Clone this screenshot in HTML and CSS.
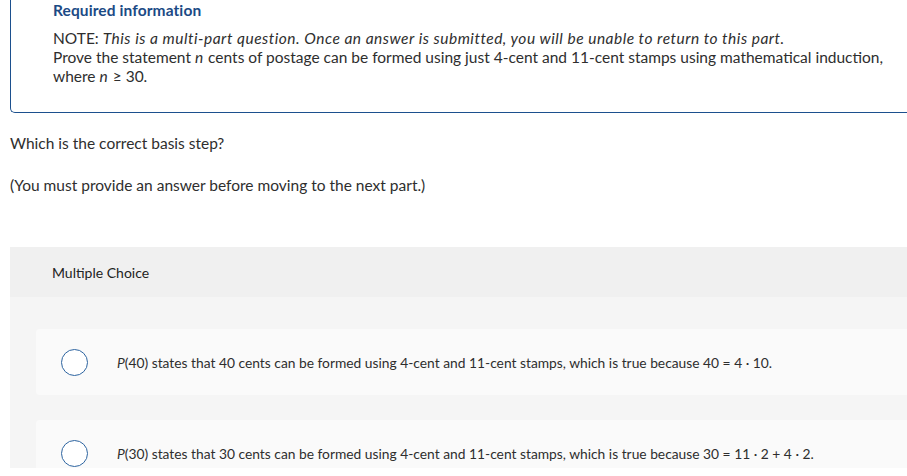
FILE: index.html
```html
<!DOCTYPE html>
<html>
<head>
<meta charset="utf-8">
<link rel="stylesheet" href="styles.css">
</head>
<body>
<div class="card">
  <div class="card-title">Required information</div>
  <div class="card-body">
    <p>NOTE: <i class="note">This is a multi-part question. Once an answer is submitted, you will be unable to return to this part.</i></p>
    <p class="prove">Prove the statement <i class="var">n</i> cents of postage can be formed using just 4-cent and 11-cent stamps using mathematical induction, where <i class="var">n</i> ≥ 30.</p>
  </div>
</div>
<div class="question">
  <p class="q1">Which is the correct basis step?</p>
  <p class="q2">(You must provide an answer before moving to the next part.)</p>
</div>
<div class="mc">
  <div class="mc-head">Multiple Choice</div>
  <div class="mc-list">
    <div class="opt">
      <span class="radio"></span>
      <span class="opt-text"><i>P</i>(40) states that 40 cents can be formed using 4-cent and 11-cent stamps, which is true because 40 = 4 · 10.</span>
    </div>
    <div class="opt">
      <span class="radio"></span>
      <span class="opt-text"><i>P</i>(30) states that 30 cents can be formed using 4-cent and 11-cent stamps, which is true because 30 = 11 · 2 + 4 · 2.</span>
    </div>
  </div>
</div>
</body>
</html>
```
FILE: styles.css
```css
html, body {
  margin: 0;
  padding: 0;
  background: #ffffff;
}
body {
  font-family: Lato, "Open Sans", sans-serif;
  color: #2e2e2e;
  width: 907px;
  height: 476px;
  overflow: hidden;
}
p { margin: 0; }
.card {
  margin-left: 10px;
  height: 113px;
  box-sizing: border-box;
  border-left: 1.5px solid #1c508e;
  border-bottom: 1.5px solid #1c508e;
  border-bottom-left-radius: 5px;
  padding-left: 42px;
}
.card-title {
  font-weight: 700;
  font-size: 15.5px;
  color: #1b4a85;
  line-height: 18px;
  padding-top: 1px;
  letter-spacing: 0.1px;
}
.card-body {
  margin-top: 10px;
  font-size: 15.5px;
  line-height: 19px;
  white-space: nowrap;
}
.note { letter-spacing: 0.5px; }
.var { display: inline-block; margin-right: 1px; }
.prove { white-space: normal; width: 852px; }
.question {
  padding-left: 10px;
  font-size: 15.5px;
  line-height: 19px;
}
.q1 { margin-top: 21px; }
.q2 { margin-top: 23px; }
.mc {
  margin: 52px 0 0 10px;
  height: 221px;
  overflow: hidden;
  background: #f5f5f5;
}
.mc-head {
  height: 50px;
  background: #f0f0f0;
  display: flex;
  align-items: center;
  padding-left: 42px;
  font-size: 14px;
  color: #222;
}
.mc-list {
  display: flex;
  flex-direction: column;
  gap: 25px;
  padding: 32px 0 0 26px;
}
.opt {
  height: 66px;
  flex: none;
  background: #fafafa;
  border-radius: 4px 0 0 4px;
  display: flex;
  align-items: center;
  padding-left: 25px;
  font-size: 13.8px;
}
.radio {
  width: 25px;
  height: 25px;
  border: 1.6px solid #2d64a0;
  border-radius: 50%;
  background: #fff;
  flex: none;
}
.opt-text {
  margin-left: 29px;
  white-space: nowrap;
}
```
